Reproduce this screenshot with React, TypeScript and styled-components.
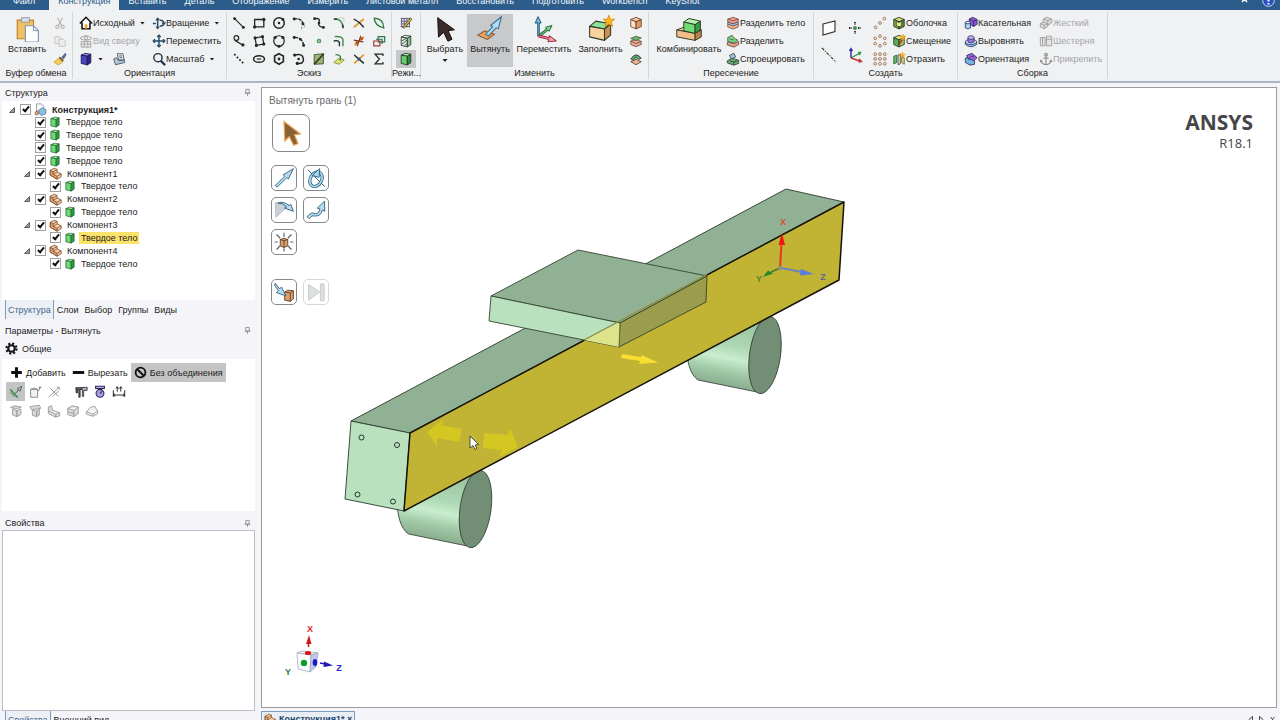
import React from 'react';
import styled, { createGlobalStyle, css } from 'styled-components';

const GlobalStyle = createGlobalStyle`
  *, *::before, *::after { box-sizing: border-box; }
  html, body, #root { height: 100%; }
  body {
    margin: 0;
    overflow: hidden;
    background: #f5f5f9;
    color: #1c1c1c;
    font: 9px/12px "Liberation Sans", Arial, sans-serif;
  }
  button { font: inherit; color: inherit; }
  svg { display: block; flex: none; }
`;

/* ---------- icons ---------- */

const K = '#1d2b22';

const Iso = ({ t, l, r, s = K }: { t: string; l: string; r: string; s?: string }) => (
  <g stroke={s} strokeWidth="0.9" strokeLinejoin="round">
    <path d="M8 1.5 14 4 8 6.8 2 4Z" fill={t} />
    <path d="M2 4 8 6.8V14.8L2 12Z" fill={l} />
    <path d="M14 4 8 6.8V14.8L14 12Z" fill={r} />
  </g>
);

const Block = ({ t, l, r, s = K }: { t: string; l: string; r: string; s?: string }) => (
  <g stroke={s} strokeWidth="0.9" strokeLinejoin="round">
    <path d="M2.5 3.5 7 1.5 13.5 2.5 9.5 4.8Z" fill={t} />
    <path d="M2.5 3.5 9.5 4.8V14.8L2.5 13Z" fill={l} />
    <path d="M9.5 4.8 13.5 2.5V12.2L9.5 14.8Z" fill={r} />
  </g>
);

const dot = (x: number, y: number, r = 1.3, f = K) => <circle key={`${x}-${y}`} cx={x} cy={y} r={r} fill={f} />;
const ring = (x: number, y: number) => (
  <circle key={`${x}-${y}`} cx={x} cy={y} r="1.6" fill="#f6e3cf" stroke="#8d6a4a" strokeWidth="0.9" />
);
const pencil = <path d="M4 13 13 2 14.8 3.6 6 14Z" fill="#dcc04a" stroke="#3b3413" strokeWidth="0.8" />;
const spark = (x: number, y: number) => (
  <path
    transform={`translate(${x} ${y})`}
    d="M0-3.4.9-1 3.3-1.1 1.4.6 2.2 3 0 1.6-2.2 3-1.4.6-3.3-1.1-.9-1Z"
    fill="#ffb91f"
    stroke="#e08a10"
    strokeWidth="0.5"
  />
);

const icons: Record<string, React.ReactNode> = {
  paste: (
    <>
      <path d="M2 2.5H12V14H2Z" fill="#f0c063" stroke="#b8862e" strokeWidth="0.7" />
      <path d="M4.5 1H9.5V3.8H4.5Z" fill="#d9dde2" stroke="#8a8f96" strokeWidth="0.5" />
      <path d="M7 6H12L15 9V16H7Z" fill="#fdfeff" stroke="#7d94b0" strokeWidth="0.7" />
      <path d="M12 6V9H15" fill="none" stroke="#7d94b0" strokeWidth="0.6" />
    </>
  ),
  cut: (
    <g fill="none" stroke="#b5b5b5" strokeWidth="1.3">
      <path d="M5 2 10 11M11 2 6 11" />
      <circle cx="5" cy="12.5" r="1.8" />
      <circle cx="11" cy="12.5" r="1.8" />
    </g>
  ),
  copy: (
    <g fill="#ececec" stroke="#c0c0c0">
      <path d="M2 3H7L9 5V11H2Z" />
      <path d="M7 6H12L14 8V14H7Z" />
    </g>
  ),
  brush: (
    <>
      <path d="M10 6 14 1.5 15 3 12 8Z" fill="#4a6ea8" stroke="#2d446e" strokeWidth="0.6" />
      <path d="M8 5 12.5 9.5 11 11 6.5 7Z" fill="#7c5a2c" />
      <path d="M6.5 7 11 11.5 6 15 1 11.5Z" fill="#f0cf52" stroke="#a98420" strokeWidth="0.6" />
    </>
  ),
  home: (
    <>
      <path d="M3.5 8 8 3.5 12.5 8V14.5H3.5Z" fill="#fff" />
      <path d="M1 8.5 8 1.5 15 8.5M3.5 7.5V14.5H12.5V7.5" fill="none" stroke="#141414" strokeWidth="1.8" />
      <path d="M6.5 9.5H9.5V14.5H6.5Z" fill="#f1a32e" />
    </>
  ),
  planview: (
    <g fill="none" stroke="#9c9c9c">
      <path d="M1 5Q8-1 15 5Q8 9 1 5Z" />
      <circle cx="8" cy="4.5" r="1.8" />
      <path d="M2.5 8.5H13.5V15H2.5ZM2.5 11.5H13.5M6 8.5V15M10 8.5V15" />
    </g>
  ),
  cube: <Block t="#8f8ff0" l="#4a44c4" r="#2b2780" s="#14124a" />,
  sheetview: (
    <g stroke="#44505f" strokeWidth="1" strokeLinejoin="round">
      <path d="M6 2H12.5L14 9H7.5Z" fill="#eef3f8" />
      <path d="M2 8 5 6.5 7.5 10 14 9.5 14.5 12 4 14.5Z" fill="#b9cadb" />
      <path d="M8 4.5H11.5M8.6 6.5H12" />
    </g>
  ),
  spin: (
    <g fill="none" stroke="#274b63" strokeWidth="1.7">
      <path d="M6.5 3V13.5M1 8.5H4.5M9 5Q13 4.5 13.5 8.5Q13 12 9 11.5" />
      <path d="M4.5 5 6.5 2.5 8.5 5M4.5 12 6.5 14.5 8.5 12M11.5 7.5 13.5 9.5 15.5 7" strokeWidth="1.3" />
    </g>
  ),
  pan: (
    <g fill="none" stroke="#1f4a66" strokeWidth="1.6">
      <path d="M8 1.5V14.5M1.5 8H14.5" />
      <path d="M6 3.5 8 1.5 10 3.5M6 12.5 8 14.5 10 12.5M3.5 6 1.5 8 3.5 10M12.5 6 14.5 8 12.5 10" />
    </g>
  ),
  zoom: (
    <g fill="none" stroke="#1d3348">
      <circle cx="6.8" cy="6.5" r="4.7" strokeWidth="1.6" />
      <path d="M10 10 15 15" strokeWidth="2.5" />
    </g>
  ),
  line: (
    <>
      <path d="M3 3 13 13" stroke={K} strokeWidth="1.5" />
      {dot(3, 3, 1.7)}
      {dot(13, 13, 1.7)}
    </>
  ),
  rect: (
    <>
      <path d="M3 4H13.5V12.5H3Z" fill="none" stroke={K} strokeWidth="1.5" />
      {dot(3, 12.5, 1.9)}
      {dot(13.5, 4, 1.9)}
    </>
  ),
  circle: (
    <>
      <circle cx="8" cy="8" r="6" fill="none" stroke={K} strokeWidth="1.7" />
      {dot(8, 8, 1.4)}
      {dot(12.5, 4, 1.6)}
    </>
  ),
  tarc: (
    <>
      <path d="M2 3.5Q11 2 12.5 9" fill="none" stroke={K} strokeWidth="1.6" strokeDasharray="4 1" />
      {dot(2.5, 3.5, 1.7)}
      {dot(12.5, 9, 1.7)}
      <path d="M11 12V15M14 10V13" stroke="#7a8a82" />
    </>
  ),
  spline: (
    <>
      <path d="M3 3Q10 2 8 7T13 13" fill="none" stroke={K} strokeWidth="1.6" />
      {dot(3, 3, 1.7)}
      {dot(8, 8, 1.5)}
      {dot(13, 13, 1.7)}
    </>
  ),
  fillet: (
    <>
      <path d="M2.5 3.5Q12 3 12.5 13.5" fill="none" stroke="#3c8d4c" strokeWidth="1.7" />
      <path d="M2 3.5H6M12.5 10V14" stroke={K} strokeWidth="1.5" />
      <path d="M8 2H13.5V7" fill="none" stroke="#8aa890" strokeDasharray="1 1" />
    </>
  ),
  trim: (
    <>
      <path d="M2 13 13.5 3.5" stroke="#e09a2f" strokeWidth="2.2" />
      <path d="M2 3.5Q8 6 13.5 13" stroke={K} strokeWidth="1.7" fill="none" />
    </>
  ),
  offsetloop: <path d="M2.5 2.5Q13 3 13.5 13.5Q3.5 12 2.5 2.5Z" fill="none" stroke="#2c7a3d" strokeWidth="1.5" />,
  tline: (
    <>
      <circle cx="5" cy="4.5" r="2.7" fill="none" stroke={K} strokeWidth="1.4" />
      <path d="M3 7 12 12.5" stroke={K} strokeWidth="1.5" />
      {dot(12.5, 12.5, 1.8)}
    </>
  ),
  rect3: (
    <>
      <path d="M3.5 4.5 12 3 13.5 11.5 5 13Z" fill="none" stroke={K} strokeWidth="1.4" />
      {[[3.5, 4.5], [12, 3], [13.5, 11.5], [5, 13]].map(([x, y]) => dot(x, y, 1.8))}
    </>
  ),
  circle3: (
    <>
      <circle cx="8" cy="8" r="6" fill="none" stroke={K} strokeWidth="1.4" />
      {dot(3.5, 4, 1.8)}
      {dot(12.5, 4, 1.8)}
      {dot(8, 14, 1.8)}
    </>
  ),
  arc3: (
    <>
      <path d="M2 4Q11 3 13.5 13" fill="none" stroke={K} strokeWidth="1.6" strokeDasharray="5 1" />
      {dot(2.5, 4, 1.7)}
      {dot(9.5, 6, 1.5)}
      {dot(13.3, 13, 1.7)}
    </>
  ),
  point: (
    <>
      {dot(8, 8, 2.7, '#4f9a62')}
      <circle cx="8" cy="8" r="1" fill="#c3e9c9" />
    </>
  ),
  offset: (
    <>
      <path d="M3 3Q11 2.5 12.5 6V14" fill="none" stroke="#3c8d4c" strokeWidth="1.6" />
      <path d="M2 8Q7.5 6.5 8.5 10V14" fill="none" stroke={K} strokeWidth="1.5" />
    </>
  ),
  split: (
    <>
      <path d="M3 13 13.5 3" stroke="#e09a2f" strokeWidth="2.2" />
      <path d="M2 7 13 9M10 2 6 14" stroke="#7a3a1c" strokeWidth="1.2" />
      {dot(5.5, 10, 1.7, '#c7451e')}
      {dot(11, 5.5, 1.7, '#c7451e')}
    </>
  ),
  project: (
    <g fill="none" strokeWidth="1.4">
      <path d="M7 3H14.5V9H7Z" stroke="#2c7a3d" />
      <path d="M2 8H9V13.5H2Z" stroke="#a43c32" />
      <path d="M4.5 6H11.5V11.5" stroke="#2e6c58" />
    </g>
  ),
  cline: <path d="M2.5 2.5 13.5 13.5" stroke={K} strokeWidth="2" strokeDasharray="2 2.2" />,
  ellipse: (
    <>
      <ellipse cx="8" cy="8" rx="6.2" ry="3.8" fill="none" stroke={K} strokeWidth="1.7" />
      <path d="M5.5 8H10.5" stroke={K} strokeWidth="1.3" />
    </>
  ),
  polygon: (
    <>
      <path d="M8 2 13 4.5V11L8 14 3 11V4.5Z" fill="none" stroke={K} strokeWidth="1.9" />
      {dot(8, 8, 1.6)}
    </>
  ),
  sweeparc: (
    <>
      <path d="M3 3.5Q12 1 13 7.5T6 13" fill="none" stroke={K} strokeWidth="1.7" />
      {dot(3, 3.5, 1.8)}
      {dot(6, 13, 1.8)}
      {dot(7.5, 8, 1.5)}
    </>
  ),
  face: (
    <>
      <path d="M2.5 3 13 2V13.5L2.5 14Z" fill="#9ab57a" stroke="#34502c" />
      <path d="M2.5 14 13.5 2" stroke="#3d3514" strokeWidth="2" />
    </>
  ),
  bend: (
    <>
      <path d="M2 12 8 7 14 9 8 14Z" fill="#e9e36e" stroke="#6b8b34" strokeWidth="0.9" />
      <path d="M4 3Q12 3 9 10" fill="none" stroke="#2c7a3d" strokeWidth="1.5" />
    </>
  ),
  cross: (
    <>
      <path d="M2.5 13 13.5 3" stroke="#e09a2f" strokeWidth="2.3" />
      <path d="M2.5 3.5 13.5 13" stroke={K} strokeWidth="1.6" />
      {dot(8, 8, 1.8, '#2b4ea0')}
    </>
  ),
  sigma: <path d="M12.5 4.5V2.5H3.5L8.5 8 3.5 13.5H12.5V11.5" fill="none" stroke={K} strokeWidth="1.4" />,
  msketch: (
    <>
      <path d="M2 3H12M2 6H12M2 9H12M2 12H12M3 2V13M6 2V13M9 2V13M12 2V13" stroke="#4c4270" strokeWidth="0.9" />
      {pencil}
    </>
  ),
  msection: (
    <>
      <Block t="#f3f7f2" l="#dff0df" r="#8cc391" />
      <path d="M3 8 8 5M3 12 9 7M6 13.5 9 11" stroke={K} strokeWidth="0.9" />
    </>
  ),
  msolid: <Block t="#b6f0b2" l="#62cf66" r="#2f8a3a" />,
  solid: <Block t="#a9efab" l="#6bdc73" r="#2f9a41" s="#185a26" />,
  select: (
    <path d="M3.5 1 4 13 7.2 10 9.8 15.5 12.3 14.3 9.9 9 13.8 8.5Z" fill="#3a2c28" stroke="#130d0b" strokeWidth="0.6" />
  ),
  pull: (
    <>
      <path d="M1 11.5 5 9 10.5 11 6.5 14Z" fill="#e9a05f" stroke="#8c5425" strokeWidth="0.6" />
      <path d="M5.5 11 9.5 6.8 8.3 6 14.5 1 12.8 7.8 11.5 7.3 7 12Z" fill="#b3dcf2" stroke="#376c8d" strokeWidth="0.6" />
    </>
  ),
  move: (
    <g strokeWidth="0.6" strokeLinejoin="round">
      <path d="M4.4 12V4.5H3L4.6 1 6.3 4.5H5.3V11Z" fill="#7bbdd8" stroke="#2a6783" />
      <path d="M5.5 11 9.5 8 9 7 12.5 6 11 9.2 10.3 8.6 6 12Z" fill="#8bd19a" stroke="#2c7a3d" />
      <path d="M5.5 11.5 11 13V11.8L15 14.8 10.3 15.3 10.7 14 5 12.5Z" fill="#f3a3ae" stroke="#a33443" />
    </g>
  ),
  fill: (
    <>
      <g stroke="#2f3b26" strokeWidth="0.6" strokeLinejoin="round">
        <path d="M1.5 6.5 5 3.5 13.5 5 10 8Z" fill="#8ee29a" />
        <path d="M1.5 6.5 10 8V14.5L1.5 12.5Z" fill="#f7d3a0" />
        <path d="M10 8 13.5 5V11.5L10 14.5Z" fill="#c98f52" />
      </g>
      {spark(12.5, 3.5)}
    </>
  ),
  blend: <Iso t="#f3c7a1" l="#fbe4cd" r="#dc9a68" s="#60341b" />,
  replace: (
    <g stroke="#4b3a2a" strokeWidth="0.8" strokeLinejoin="round">
      <path d="M2 8 8 6 14 8.5V12L8 14.5 2 12Z" fill="#f0a792" />
      <path d="M2 5 8 2.5 14 4.5 8 7.5Z" fill="#58bf6f" />
      <path d="M2 8 8 11 14 8.5" fill="none" />
    </g>
  ),
  tweak: (
    <g stroke="#3b3a30" strokeWidth="0.9" strokeLinejoin="round">
      <path d="M2 11 8 8.5 14 11 8 14.5Z" fill="#f3b48f" />
      <path d="M2 8Q8-1 14 7L11 8.5Q8 4 5 9.5Z" fill="#55a26b" />
    </g>
  ),
  combine: (
    <g stroke="#2f3b26" strokeWidth="0.55" strokeLinejoin="round">
      <path d="M1 8.5 5 7 15 8.5 11.5 10.5Z" fill="#fbd9ae" />
      <path d="M1 8.5 11.5 10.5V14.5L1 12.5Z" fill="#f3bd88" />
      <path d="M11.5 10.5 15 8.5V12.5L11.5 14.5Z" fill="#bf8049" />
      <path d="M5 4 8 2 14.5 3.5 11.5 5.5Z" fill="#b5f3ae" />
      <path d="M5 4 11.500 5.5V10.5L5 9Z" fill="#6fdc74" />
      <path d="M11.5 5.5 14.5 3.5V8.5L11.5 10.5Z" fill="#379c44" />
    </g>
  ),
  splitbody: (
    <g stroke="#5b4038" strokeWidth="0.8" strokeLinejoin="round">
      <path d="M2 9 8 11 14 9V12.5L8 15 2 12.5Z" fill="#f4b08f" />
      <path d="M2 6.5 8 9 14 6.5V9L8 11.5 2 9Z" fill="#9bc6ea" />
      <path d="M2 3.5 8 1.5 14 3.5V6.5L8 8.8 2 6.5Z" fill="#f3a08a" />
      <path d="M2 3.5 8 5.5 14 3.5" fill="none" />
    </g>
  ),
  splitface: (
    <g stroke="#33402c" strokeWidth="0.8" strokeLinejoin="round">
      <path d="M1.5 9 9 11 14.5 8.5V12L9 15 1.5 12.5Z" fill="#f09a84" />
      <path d="M2 4 7 1.5 9 4.5 13.5 7 9 10.5 2 8Z" fill="#7ed586" />
      <path d="M4 5.5 9 7" />
    </g>
  ),
  projectc: (
    <g stroke="#2d3b33" strokeWidth="0.9" strokeLinejoin="round">
      <path d="M1.5 10 7 7 14.5 9.5V13L9 15 1.5 12.5Z" fill="#6cae71" />
      <path d="M4 4 9 1.5 11 5.5 6 8Z" fill="#9cc4e8" />
      <path d="M9 10.5V15M4 10 9 11.5 14 9.5" fill="none" />
    </g>
  ),
  plane: <path d="M2 4 14 1V11.5L2 15Z" fill="#fff" stroke="#2d2d2d" strokeWidth="1.1" />,
  axis: <path d="M1 1 15 15" stroke="#2d2d2d" strokeWidth="1.1" strokeDasharray="3 1.2 1 1.2" />,
  pointc: (
    <>
      <path d="M8 2V5M8 11V14M2 8H5M11 8H14" stroke={K} strokeWidth="1.8" strokeDasharray="1.5 1" />
      {dot(8, 8, 2, '#3f8a58')}
    </>
  ),
  origin: (
    <g fill="none" strokeWidth="1.4">
      <path d="M4 11V2M2.5 4 4 1.5 5.5 4" stroke="#2a2aa8" />
      <path d="M4 11 13 6M11 5.5 13.5 5.5 12.5 8" stroke="#2c9a4d" />
      <path d="M4 11 14 14.5M12 12 14.5 14.5 11.5 15" stroke="#c23535" />
    </g>
  ),
  patline: <>{[[3, 13], [8, 8], [13, 3]].map(([x, y]) => ring(x, y))}</>,
  patcircle: <>{[[2.5, 5], [8, 2.5], [13.5, 5], [13.5, 11], [8, 13.5], [2.5, 11]].map(([x, y]) => ring(x, y))}</>,
  patfill: <>{[2.5, 8, 13.5].flatMap(y => [2.5, 8, 13.5].map(x => ring(x, y)))}</>,
  shell: (
    <>
      <Iso t="#d3dd76" l="#7aa33e" r="#5d8430" />
      <path d="M5 6V11L8 12.3 11 11V6L8 7.5Z" fill="#e3e98d" stroke="#34401c" strokeWidth="0.8" />
    </>
  ),
  offsetf: (
    <>
      <Iso t="#dfe07b" l="#5fae55" r="#a5c956" />
      <path d="M8 12 11.5 6.5" stroke="#a42b1e" strokeWidth="1.6" />
      {spark(12.5, 3.5)}
    </>
  ),
  mirror: (
    <>
      <path d="M2 5 5.5 3.5V12L2 13.5Z" fill="#62b768" stroke="#1f5a2a" strokeWidth="0.9" />
      <path d="M7 3.5 9.5 2.5V13.5L7 14.5Z" fill="#e5eadf" stroke="#35402f" strokeWidth="0.9" />
      <path d="M11 5.5 14 7V14L11 12Z" fill="#d7dc80" stroke="#5c6420" strokeWidth="0.9" />
      {spark(12, 3.5)}
    </>
  ),
  tangent: (
    <g stroke="#26205c" strokeWidth="0.9" strokeLinejoin="round">
      <path d="M6 3.5 10 1.5 15 4V9.5L11 12 6 9Z" fill="#8e5ad4" />
      <path d="M6 3.5 11 6V12M11 6 15 4" fill="none" />
      <path d="M1.5 7.5V13.5Q4.5 16 7.5 13.5V7.5Z" fill="#a8d6f0" />
      <ellipse cx="4.5" cy="7.5" rx="3" ry="1.5" fill="#d9effa" />
    </g>
  ),
  align: (
    <g stroke="#2c2b63" strokeWidth="0.9">
      <path d="M1.5 9V12Q8 17 14.5 12V9Z" fill="#8ec4e8" />
      <ellipse cx="8" cy="9" rx="6.5" ry="3" fill="#c8e5f6" />
      <path d="M4.5 4V9Q8 11.5 11.5 9V4Z" fill="#9a78dc" />
      <ellipse cx="8" cy="4" rx="3.5" ry="2" fill="#cdb9f3" />
    </g>
  ),
  orient: (
    <g stroke="#26205c" strokeWidth="0.9" strokeLinejoin="round">
      <path d="M1.5 7 6 6 12 9.5V14L7 15 1.5 12Z" fill="#77b4dd" />
      <path d="M3 4 9 1.5 15 6.5 11 10 8 8.5 5 8Z" fill="#9a69d6" />
      <path d="M5 8 9 4.5 12 6" fill="none" />
    </g>
  ),
  rigid: (
    <g fill="#dcdcdc" stroke="#9b9b9b" strokeLinejoin="round">
      <path d="M5 3.5 9 1.5 14.5 3.5V8L10 10.5 5 8.5Z" />
      <path d="M1.5 8.5 5 7 10 9V12L6 14.5 1.5 12.5Z" />
      <path d="M5 3.5 10 5.5 14.5 3.5M10 5.5V10M1.5 8.5 6 10.5 10 9M6 10.5V14" fill="none" />
    </g>
  ),
  gear: (
    <g fill="#e3e3e3" stroke="#9b9b9b">
      <path d="M1.5 4H7V13.5H1.5Z" />
      <path d="M8.5 2.5H14.5V13.5H8.5ZM4 4V13M8.5 6H14.5" />
    </g>
  ),
  anchor: (
    <g fill="none" stroke="#8e8e8e" strokeWidth="1.3">
      <circle cx="8" cy="3" r="1.5" />
      <path d="M8 4.5V14.5M5 7H11M2 9.5Q3 14 8 14.5Q13 14 14 9.5M1.5 11.5 2 9.5 4 10.5M14.5 11.5 14 9.5 12 10.5" />
    </g>
  ),
  doc: (
    <g strokeWidth="0.8" strokeLinejoin="round">
      <path d="M3 1H9L12 4V12H3Z" fill="#f3f7fb" stroke="#6e7c8b" />
      <path d="M6 9 10 6 14.5 8V13L10 15.5 6 13Z" fill="#8fbfdf" stroke="#36627e" />
      <path d="M1.5 11 5 9.5V14.5H1.5Z" fill="#e2b184" stroke="#7c5330" />
    </g>
  ),
  component: (
    <g stroke="#6e3f20" strokeWidth="0.9" strokeLinejoin="round">
      <path d="M1.5 4 6.5 1.5 10 3V6L15 8.5V12L10 15 1.5 10Z" fill="#f6cba6" />
      <path d="M1.5 4 5 6V9L10 11.5V15L1.5 10Z" fill="#e3a270" />
      <path d="M5 6 10 3M5 9 10 6M10 11.5 15 8.5" fill="none" />
    </g>
  ),
  pin: <path d="M5 2.5H11V9H5ZM3 9.5H13M8 9.5V14" fill="none" stroke="#8d8d96" strokeWidth="1.6" />,
  cog: (
    <g fill="none" stroke="#161616">
      <circle cx="8" cy="8" r="4" strokeWidth="2.6" />
      <circle cx="8" cy="8" r="6.2" strokeWidth="2.6" strokeDasharray="2.6 2.27" />
    </g>
  ),
  plus: <path d="M8 1.5V14.5M1.5 8H14.5" stroke="#0e0e0e" strokeWidth="3.6" />,
  minus: <path d="M1 8H15" stroke="#0e0e0e" strokeWidth="3.6" />,
  forbid: (
    <g fill="none" stroke="#0e0e0e" strokeWidth="2.2">
      <circle cx="8" cy="8" r="6" />
      <path d="M4 4 12 12" />
    </g>
  ),
  pulldir: (
    <>
      <path d="M6 11 11 5.5M9.500 4.500 14.500 1.500 12.500 7Z" fill="#c9d3d6" stroke="#4b5a5c" strokeWidth="1.1" />
      <path d="M1.5 5 8 12.5 10 14" fill="none" stroke="#35914a" strokeWidth="1.8" />
      <path d="M1.500 8.500 6 13.500" stroke="#5b6a66" />
    </>
  ),
  pullbox: (
    <g fill="#f1f1f1" stroke="#7d7d7d">
      <path d="M3 5 7 3.5 11 5V14H3ZM3 5H11M12 7 14 2M12 3 14 2 15 4" />
    </g>
  ),
  pullcross: (
    <g fill="none" stroke="#909090">
      <path d="M2 13.5 14 2.5M11 2.5H14V5.5M3 3 13 13M6 13 13.5 7" />
    </g>
  ),
  calipers: (
    <g stroke="#22262b" strokeWidth="0.9">
      <path d="M2 3H9V5H7V14H5.5V5H4V9H2.5Z" fill="#5a6068" />
      <path d="M8.5 3 15 2.5V6L11 6.5V13H9.5V5Z" fill="#a9b0b8" />
    </g>
  ),
  gauge: (
    <g stroke="#27244f" strokeWidth="1.2">
      <path d="M3 1.5H13V4H3Z" fill="#b9b8e6" />
      <circle cx="8" cy="9.5" r="4.5" fill="#a5a1de" />
      <path d="M8 9.5 10.5 7" />
    </g>
  ),
  ruler: (
    <path d="M1.5 6V13.5M14.500 6V13.500M1.5 11.500H14.5M6 2V7.500M10 2V7.500M4.5 4 6 2 7.5 4M8.5 4 10 2 11.5 4M3.500 10 1.500 11.500 3.500 13M12.500 10 14.500 11.500 12.500 13" fill="none" stroke="#22262b" strokeWidth="1.1" />
  ),
  g1: (
    <path d="M1.5 4 7 2 14 3.5 9 5.5ZM4 6 9 7.5V14.5L4 12.5ZM9 7.5 13.5 5.5V12L9 14.5Z" fill="#dadada" stroke="#999" strokeLinejoin="round" />
  ),
  g2: (
    <path d="M2 3 13 1.5 14.5 5 4 6.5ZM5 7 10 8V14.5L5 13ZM10 8 13 6V12.5L10 14.5Z" fill="#dadada" stroke="#999" strokeLinejoin="round" />
  ),
  g3: (
    <path d="M1.5 3.5 5 2 6.5 7 14.5 10V13.5L10 15 1.5 11ZM1.5 8 10 11.5 14 10M10 11.5V15" fill="#dadada" stroke="#999" strokeLinejoin="round" />
  ),
  g4: (
    <path d="M2 5 7 2 14 3.5V11L9 14.5 2 12ZM2 5 9 7 14 3.5M9 7V14M2 9 9 11" fill="#dadada" stroke="#999" strokeLinejoin="round" />
  ),
  g5: (
    <path d="M1.5 9 6 4 11 2.5 14.5 8V11L9 14 1.5 11.5ZM1.5 9 9 11.5 14.5 8M9 11.5V14" fill="#f0f0f0" stroke="#999" strokeLinejoin="round" />
  ),
  goldarrow: (
    <path d="M4 1.500 4.500 12.5 7 10 9.5 15 12 14 9.9 9 13.3 8.5Z" fill="#85633a" stroke="#f0a04a" strokeWidth="0.7" />
  ),
  vdir: <path d="M1 14 8.5 6.5 7.3 5.5 15.5 0.5 11.5 8.8 10.3 7.7 2.5 15.3Z" fill="#b4dcee" stroke="#2b5c78" strokeWidth="0.7" />,
  vrev: (
    <g stroke="#2b5c78" fill="none">
      <path d="M1.500 1.500 15 15" strokeWidth="0.8" />
      <ellipse cx="8" cy="9" rx="4.500" ry="6.200" strokeWidth="2.6" transform="rotate(30 8 9)" />
      <ellipse cx="8" cy="9" rx="4.500" ry="6.200" strokeWidth="1.4" stroke="#a9d9f0" transform="rotate(30 8 9)" />
      <path d="M5 6 11 0.5 10.500 7.500Z" fill="#a9d9f0" strokeWidth="0.7" />
    </g>
  ),
  vedge: (
    <>
      <path d="M1 2 12 4 1.5 14Z" fill="#c9cfd6" stroke="#a4acb6" strokeWidth="0.5" />
      <path d="M3 2.500Q7 2 10 5.500L8.500 6.500 15.500 9 13.500 3.500 12 4.500Q8 0.500 3 2.500Z" fill="#b4dcee" stroke="#2b5c78" strokeWidth="0.7" />
    </>
  ),
  vsweep: (
    <path d="M1 13.500Q4 9 7.5 11Q11 10.500 11 7L9 6.500 14.8 1 15 9 13 8Q12 13 7.500 12.800Q4.5 11.500 2.5 15Z" fill="#b4dcee" stroke="#2b5c78" strokeWidth="0.7" />
  ),
  vscale: (
    <>
      <path d="M2 2 5 5M14 2 11 5M2 14 5 11M14 14 11 11M8 0.5V4M8 15.5V13M0.5 8H3M15.5 8H13" stroke="#5b5f66" strokeWidth="0.9" />
      <path d="M5 6 8 5 11 6V11L8 12.5 5 11Z" fill="#d99f6e" stroke="#5e3d22" strokeWidth="0.7" />
      <path d="M5 6 8 7 11 6M8 7V12" stroke="#5e3d22" strokeWidth="0.7" fill="none" />
    </>
  ),
  vupto: (
    <>
      <path d="M8.5 8 11 6.5 15.5 7V13.5L13 15.5 8.5 14.500Z" fill="#d99f6e" stroke="#5e3d22" strokeWidth="0.7" />
      <path d="M8.500 8 13 8.800V15.500M13 8.800 15.500 7" fill="none" stroke="#5e3d22" strokeWidth="0.7" />
      <path d="M1 1 4.5 5.5 6 4 9.5 11 2 8.5 3.5 7 0.5 2.5Z" fill="#b4dcee" stroke="#2b5c78" strokeWidth="0.7" />
    </>
  ),
  vnext: (
    <g fill="#dde2df" stroke="#c2c7c4" strokeWidth="0.7">
      <path d="M2 2 11 8 2 14.5Z" />
      <path d="M11.5 1.5H14.5V15H11.5Z" />
    </g>
  ),
};

const Icon = ({ name, size = 14 }: { name: string; size?: number }) => (
  <svg width={size} height={size} viewBox="0 0 16 16" aria-hidden="true">
    {icons[name]}
  </svg>
);

/* ---------- window and ribbon ---------- */

const Window = styled.div`
  display: flex;
  flex-direction: column;
  height: 100vh;
  white-space: nowrap;
`;

const TabBar = styled.nav`
  display: flex;
  flex: none;
  align-items: flex-end;
  height: 10px;
  padding: 0 5px 0 4px;
  overflow: hidden;
  background: #2b5c8a;
`;

const RibbonTab = styled.button<{ $active?: boolean; $file?: boolean }>`
  flex: none;
  height: 19px;
  padding: 0 ${p => (p.$file ? 14 : 9)}px 0 9px;
  border: 0;
  line-height: 18px;
  color: ${p => (p.$active ? '#2b5c8a' : '#f1f6fb')};
  background: ${p => (p.$active ? '#f0f1f2' : 'transparent')};
`;

const TabBarTools = styled.div`
  display: flex;
  align-items: flex-end;
  gap: 14px;
  margin-left: auto;
`;

const BarButton = styled.button`
  display: grid;
  place-items: center;
  height: 19px;
  padding: 0;
  border: 0;
  background: transparent;
`;

const Ribbon = styled.div`
  display: flex;
  flex: none;
  height: 73px;
  background: #f0f1f2;
  border-bottom: 2px solid #a9b8c4;
`;

const Group = styled.section<{ $width: number }>`
  display: flex;
  flex-direction: column;
  flex: 0 0 ${p => p.$width}px;
  min-width: 0;
  margin: 2px 0;
  padding-top: 2px;
  border-right: 1px solid #d3d6d9;
`;

const GroupBody = styled.div<{ $pad?: number; $center?: boolean }>`
  display: flex;
  flex: 1;
  padding-left: ${p => p.$pad ?? 0}px;
  justify-content: ${p => (p.$center ? 'center' : 'flex-start')};
`;

const GroupLabel = styled.h2`
  margin: 0;
  padding-bottom: 1px;
  font-size: 9px;
  line-height: 11px;
  font-weight: 400;
  text-align: center;
`;

const Stack = styled.div<{ $width?: number; $align?: string }>`
  display: grid;
  grid-template-rows: repeat(3, 18px);
  justify-items: ${p => p.$align ?? 'start'};
  flex: none;
  width: ${p => (p.$width ? `${p.$width}px` : 'auto')};
`;

const ToolRow = styled.div`
  display: flex;
  align-items: center;
  gap: 4px;
`;

const toolBase = css`
  display: inline-flex;
  align-items: center;
  padding: 0;
  border: 0;
  background: transparent;
`;

const Tool = styled.button<{ $active?: boolean }>`
  ${toolBase}
  height: 18px;
  padding: 0 ${p => (p.$active ? 3 : 0)}px;
  background: ${p => (p.$active ? '#c6c7c8' : 'transparent')};
  &:disabled { color: #a3a5a8; }
`;

const BigTool = styled.button<{ $width: number; $active?: boolean }>`
  ${toolBase}
  flex-direction: column;
  flex: 0 0 ${p => p.$width}px;
  height: 53px;
  padding-top: 1px;
  background: ${p => (p.$active ? '#c8c9ca' : 'transparent')};
`;

const BigIcon = styled.span`
  display: grid;
  place-items: center;
  height: 28px;
`;

const Caret = styled.span`
  width: 5px;
  height: 3px;
  margin: 0 5px;
  background: #1c1c1c;
  clip-path: polygon(0 0, 100% 0, 50% 100%);
`;

const BigCaret = styled(Caret)`
  margin-top: 4px;
`;

const SketchGrid = styled.div`
  display: grid;
  grid-template: repeat(3, 18px) / repeat(8, 20px);
  place-items: center;
`;

const DatumGrid = styled.div`
  display: grid;
  grid-template: repeat(2, 27px) / repeat(2, 26px);
  place-items: center;
`;

const Labeled = ({ icon, text, caret, disabled }: { icon: string; text: string; caret?: boolean; disabled?: boolean }) => (
  <Tool type="button" disabled={disabled}>
    <Icon name={icon} />
    {text}
    {caret && <Caret />}
  </Tool>
);

const Glyph = ({ icon, label, active, size }: { icon: string; label: string; active?: boolean; size?: number }) => (
  <Tool type="button" aria-label={label} $active={active}>
    <Icon name={icon} size={size} />
  </Tool>
);

const Big = ({ icon, text, width, size = 28, active, caret }: {
  icon: string; text: string; width: number; size?: number; active?: boolean; caret?: boolean;
}) => (
  <BigTool type="button" $width={width} $active={active}>
    <BigIcon><Icon name={icon} size={size} /></BigIcon>
    {text}
    {caret && <BigCaret />}
  </BigTool>
);

const ribbonTabs = ['Файл', 'Конструкция', 'Вставить', 'Деталь', 'Отображение', 'Измерить', 'Листовой металл', 'Восстановить', 'Подготовить', 'Workbench', 'KeyShot'];

const sketchTools = [
  'line', 'rect', 'circle', 'tarc', 'spline', 'fillet', 'trim', 'offsetloop',
  'tline', 'rect3', 'circle3', 'arc3', 'point', 'offset', 'split', 'project',
  'cline', 'ellipse', 'polygon', 'sweeparc', 'face', 'bend', 'cross', 'sigma',
];

const RibbonBar = () => (
  <Ribbon>
    <Group $width={73}>
      <GroupBody $pad={4}>
        <Big icon="paste" text="Вставить" width={46} size={26} />
        <Stack $width={20} $align="center">
          <Glyph icon="cut" label="Вырезать" />
          <Glyph icon="copy" label="Копировать" />
          <Glyph icon="brush" label="Формат по образцу" />
        </Stack>
      </GroupBody>
      <GroupLabel>Буфер обмена</GroupLabel>
    </Group>
    <Group $width={154}>
      <GroupBody $pad={6}>
        <Stack $width={73}>
          <Labeled icon="home" text="Исходный" caret />
          <Labeled icon="planview" text="Вид сверху" disabled />
          <ToolRow>
            <Tool type="button" aria-label="Виды"><Icon name="cube" /><Caret /></Tool>
            <Glyph icon="sheetview" label="Вид на плоскость" />
          </ToolRow>
        </Stack>
        <Stack>
          <Labeled icon="spin" text="Вращение" caret />
          <Labeled icon="pan" text="Переместить" />
          <Labeled icon="zoom" text="Масштаб" caret />
        </Stack>
      </GroupBody>
      <GroupLabel>Ориентация</GroupLabel>
    </Group>
    <Group $width={165}>
      <GroupBody $pad={2}>
        <SketchGrid>
          {sketchTools.map(name => <Glyph key={name} icon={name} label={name} />)}
        </SketchGrid>
      </GroupBody>
      <GroupLabel>Эскиз</GroupLabel>
    </Group>
    <Group $width={29}>
      <GroupBody $center>
        <Stack $align="center">
          <Glyph icon="msketch" label="Режим эскиза" />
          <Glyph icon="msection" label="Режим сечения" />
          <Glyph icon="msolid" label="Объемный режим" active />
        </Stack>
      </GroupBody>
      <GroupLabel>Режи...</GroupLabel>
    </Group>
    <Group $width={228}>
      <GroupBody $pad={2}>
        <Big icon="select" text="Выбрать" width={44} size={26} caret />
        <Big icon="pull" text="Вытянуть" width={46} active />
        <Big icon="move" text="Переместить" width={62} />
        <Big icon="fill" text="Заполнить" width={51} />
        <Stack $width={20} $align="center">
          <Glyph icon="blend" label="Сопряжение" />
          <Glyph icon="replace" label="Заменить" />
          <Glyph icon="tweak" label="Подправить" />
        </Stack>
      </GroupBody>
      <GroupLabel>Изменить</GroupLabel>
    </Group>
    <Group $width={165}>
      <GroupBody $pad={3}>
        <Big icon="combine" text="Комбинировать" width={74} />
        <Stack $width={85}>
          <Labeled icon="splitbody" text="Разделить тело" />
          <Labeled icon="splitface" text="Разделить" />
          <Labeled icon="projectc" text="Спроецировать" />
        </Stack>
      </GroupBody>
      <GroupLabel>Пересечение</GroupLabel>
    </Group>
    <Group $width={144}>
      <GroupBody $pad={2}>
        <DatumGrid>
          <Glyph icon="plane" label="Плоскость" size={16} />
          <Glyph icon="pointc" label="Точка" size={16} />
          <Glyph icon="axis" label="Ось" size={16} />
          <Glyph icon="origin" label="Начало координат" size={16} />
        </DatumGrid>
        <Stack $width={24} $align="center">
          <Glyph icon="patline" label="Линейный массив" />
          <Glyph icon="patcircle" label="Круговой массив" />
          <Glyph icon="patfill" label="Массив заполнения" />
        </Stack>
        <Stack>
          <Labeled icon="shell" text="Оболочка" />
          <Labeled icon="offsetf" text="Смещение" />
          <Labeled icon="mirror" text="Отразить" />
        </Stack>
      </GroupBody>
      <GroupLabel>Создать</GroupLabel>
    </Group>
    <Group $width={150}>
      <GroupBody $pad={6}>
        <Stack $width={75}>
          <Labeled icon="tangent" text="Касательная" />
          <Labeled icon="align" text="Выровнять" />
          <Labeled icon="orient" text="Ориентация" />
        </Stack>
        <Stack>
          <Labeled icon="rigid" text="Жесткий" disabled />
          <Labeled icon="gear" text="Шестерня" disabled />
          <Labeled icon="anchor" text="Прикрепить" disabled />
        </Stack>
      </GroupBody>
      <GroupLabel>Сборка</GroupLabel>
    </Group>
  </Ribbon>
);

/* ---------- side panels ---------- */

const Workspace = styled.div`
  display: flex;
  flex: 1;
  min-height: 0;
`;

const Sidebar = styled.aside`
  display: flex;
  flex-direction: column;
  flex: 0 0 257px;
  min-height: 0;
  padding: 1px 2px 0;
`;

const PanelTitle = styled.h3<{ $tall?: boolean }>`
  display: flex;
  flex: none;
  align-items: center;
  justify-content: space-between;
  height: ${p => (p.$tall ? 19 : 17)}px;
  margin: 0;
  padding: ${p => (p.$tall ? 5 : 0)}px 3px 0;
  font-size: 9px;
  font-weight: 400;
`;

const PanelArea = styled.div<{ $height: number }>`
  flex: 0 0 ${p => p.$height}px;
  padding-top: 2px;
  background: #fff;
`;

const Tree = styled.ul`
  display: grid;
  grid-auto-rows: 1fr;
  height: 167px;
  margin: 0;
  padding: 0;
  list-style: none;
`;

const TreeRow = styled.li<{ $level: number }>`
  display: flex;
  align-items: center;
  gap: 3px;
  padding-left: ${p => 5 + p.$level * 15}px;
`;

const Twisty = styled.button<{ $shown?: boolean }>`
  width: 10px;
  height: 10px;
  padding: 2px;
  border: 0;
  background: transparent;
  visibility: ${p => (p.$shown ? 'visible' : 'hidden')};
`;

const TreeLabel = styled.label<{ $bold?: boolean; $selected?: boolean }>`
  display: flex;
  align-items: center;
  gap: 3px;
  font-weight: ${p => (p.$bold ? 700 : 400)};
  span {
    padding: 0 2px;
    background: ${p => (p.$selected ? '#fbe26a' : 'transparent')};
  }
`;

const Check = styled.input`
  appearance: none;
  position: relative;
  width: 11px;
  height: 11px;
  margin: 0;
  border: 1px solid #a0a0a0;
  background: #fff;
  &:checked::after {
    content: '';
    position: absolute;
    left: 3px;
    top: 0;
    width: 4px;
    height: 7px;
    border: solid #111;
    border-width: 0 2px 2px 0;
    transform: rotate(40deg);
  }
`;

const DockTabs = styled.div<{ $height: number }>`
  display: flex;
  flex: 0 0 ${p => p.$height}px;
  padding-left: 3px;
  overflow: hidden;
`;

const DockTab = styled.button<{ $active?: boolean; $short?: boolean }>`
  flex: none;
  height: ${p => (p.$short ? 17 : 19)}px;
  padding: 0 ${p => (p.$active ? 2 : 3)}px;
  border: solid #7c9dbd;
  border-width: 0 ${p => (p.$active ? '1px' : '0')};
  background: ${p => (p.$active ? '#eceff4' : 'transparent')};
  color: ${p => (p.$active ? '#44698f' : '#1c1c1c')};
`;

const OptionsHead = styled.div`
  flex: none;
  padding: 3px 0 1px;
`;

const OptionsLine = styled.div`
  display: flex;
  align-items: center;
  gap: 4px;
  height: 19px;
  padding-left: 3px;
`;

const ModeRow = styled.div`
  display: flex;
  height: 19px;
  padding: 0 0 0 5px;
  margin-top: 2px;
`;

const ModeButton = styled.button<{ $active?: boolean }>`
  ${toolBase}
  gap: 3px;
  height: 19px;
  padding: 0 3px;
  background: ${p => (p.$active ? '#c4c4c4' : 'transparent')};
`;

const OptionRow = styled.div`
  display: flex;
  height: 19px;
  padding-left: 4px;
`;

const OptionButton = styled.button<{ $active?: boolean; $gap?: boolean }>`
  ${toolBase}
  justify-content: center;
  width: 19px;
  height: 19px;
  margin-left: ${p => (p.$gap ? 8 : 0)}px;
  background: ${p => (p.$active ? '#c4c4c4' : 'transparent')};
`;

const PropertiesBox = styled.div`
  flex: 1;
  min-height: 0;
  background: #fff;
  border: 1px solid #bcbfc6;
`;

type Node = { level: number; kind: 'doc' | 'solid' | 'component'; text: string; selected?: boolean };
const body = (level: number, selected?: boolean): Node => ({ level, kind: 'solid', text: 'Твердое тело', selected });
const part = (n: number): Node => ({ level: 1, kind: 'component', text: `Компонент${n}` });
const nodes: Node[] = [
  { level: 0, kind: 'doc', text: 'Конструкция1*' },
  body(1), body(1), body(1), body(1),
  part(1), body(2), part(2), body(2), part(3), body(2, true), part(4), body(2),
];

const pinIcon = <Icon name="pin" size={9} />;

const SidePanels = () => (
  <Sidebar>
    <PanelTitle>Структура {pinIcon}</PanelTitle>
    <PanelArea $height={199}>
      <Tree>
        {nodes.map((n, i) => (
          <TreeRow key={i} $level={n.level}>
            <Twisty type="button" aria-label="Свернуть" $shown={n.kind !== 'solid'}>
              <svg width="6" height="6" viewBox="0 0 6 6">
                <path d="M5.5 .5V5.5H.5Z" fill="#9a9a9a" stroke="#444" strokeWidth="0.8" />
              </svg>
            </Twisty>
            <TreeLabel $bold={n.kind === 'doc'} $selected={n.selected}>
              <Check type="checkbox" defaultChecked />
              <Icon name={n.kind} size={n.kind === 'solid' ? 12 : 13} />
              <span>{n.text}</span>
            </TreeLabel>
          </TreeRow>
        ))}
      </Tree>
    </PanelArea>
    <DockTabs $height={19}>
      <DockTab type="button" $active>Структура</DockTab>
      {['Слои', 'Выбор', 'Группы', 'Виды'].map(t => <DockTab type="button" key={t}>{t}</DockTab>)}
    </DockTabs>
    <OptionsHead>
      <PanelTitle>Параметры - Вытянуть {pinIcon}</PanelTitle>
      <OptionsLine><Icon name="cog" size={13} />Общие</OptionsLine>
    </OptionsHead>
    <PanelArea $height={152}>
      <ModeRow>
        <ModeButton type="button"><Icon name="plus" size={13} />Добавить</ModeButton>
        <ModeButton type="button"><Icon name="minus" size={13} />Вырезать</ModeButton>
        <ModeButton type="button" $active><Icon name="forbid" size={13} />Без объединения</ModeButton>
      </ModeRow>
      <OptionRow>
        <OptionButton type="button" aria-label="Направление" $active><Icon name="pulldir" /></OptionButton>
        <OptionButton type="button" aria-label="Обе стороны"><Icon name="pullbox" /></OptionButton>
        <OptionButton type="button" aria-label="Без вытягивания"><Icon name="pullcross" /></OptionButton>
        <OptionButton type="button" aria-label="Размер" $gap><Icon name="calipers" /></OptionButton>
        <OptionButton type="button" aria-label="Измерение"><Icon name="gauge" /></OptionButton>
        <OptionButton type="button" aria-label="Линейка"><Icon name="ruler" /></OptionButton>
      </OptionRow>
      <OptionRow>
        {['g1', 'g2', 'g3', 'g4', 'g5'].map(g => (
          <OptionButton type="button" key={g} aria-label={g}><Icon name={g} /></OptionButton>
        ))}
      </OptionRow>
    </PanelArea>
    <PanelTitle $tall>Свойства {pinIcon}</PanelTitle>
    <PropertiesBox />
    <DockTabs $height={9}>
      <DockTab type="button" $active $short>Свойства</DockTab>
      <DockTab type="button" $short>Внешний вид</DockTab>
    </DockTabs>
  </Sidebar>
);

/* ---------- graphics area ---------- */

const Main = styled.main`
  display: flex;
  flex-direction: column;
  flex: 1;
  min-width: 0;
  padding: 4px 3px 0 4px;
`;

const Viewport = styled.div`
  position: relative;
  flex: 1;
  min-height: 0;
  overflow: hidden;
  background: #fff;
  border: 1px solid #9b9b9b;
`;

const Scene = styled.svg`
  position: absolute;
  inset: 0;
  width: 100%;
  height: 100%;
`;

const Overlay = styled.div`
  position: relative;
  padding: 7px 0 0 7px;
`;

const Hint = styled.p`
  margin: 0 0 7px;
  font-size: 10px;
  line-height: 12px;
  color: #66686b;
`;

const ToolGuides = styled.div`
  display: grid;
  grid-template-columns: 26px 26px;
  gap: 6px;
  padding: 13px 0 0 2px;
`;

const Guide = styled.button<{ $size?: number }>`
  display: grid;
  place-items: center;
  width: ${p => p.$size ?? 26}px;
  height: ${p => p.$size ?? 26}px;
  margin: 0;
  padding: 0;
  border: 1px solid #85888d;
  border-radius: ${p => (p.$size ? 7 : 5)}px;
  background: #fff;
  &:disabled { border-color: #d5d7d9; }
`;

const MainGuide = styled(Guide)`
  margin-left: 3px;
`;

const GuideBreak = styled.div`
  grid-column: 1 / -1;
  height: 12px;
`;

const Brand = styled.div`
  position: absolute;
  top: 21px;
  right: 23px;
  text-align: right;
  color: #454648;
`;

const BrandName = styled.div`
  font: 700 21px/26px "Open Sans", sans-serif;
`;

const BrandVersion = styled.div`
  font: 13px/16px "Open Sans", sans-serif;
`;

const DocTabs = styled.div`
  display: flex;
  align-items: flex-start;
  flex: none;
  height: 9px;
  margin-top: 3px;
  overflow: hidden;
`;

const DocTab = styled.button`
  ${toolBase}
  flex: none;
  gap: 3px;
  height: 19px;
  padding: 0 2px 4px;
  border: solid #7c9dbd;
  border-width: 1px 1px 0;
  background: #e9eef5;
  color: #23486e;
  font-weight: 700;
`;

const DocNav = styled.div`
  display: flex;
  gap: 6px;
  margin: 5px 2px 0 auto;
`;

const NavButton = styled.button`
  padding: 0;
  border: 0;
  background: transparent;
`;

const Cylinder = ({ x, y }: { x: number; y: number }) => (
  <g transform={`translate(${x} ${y})`} stroke="#2c3a2e" strokeWidth="0.8">
    <path d="M5-38 -60-52C-84-30-82 15-67 25L-8 37Z" fill="url(#cyl)" />
    <ellipse rx="15.5" ry="39" transform="rotate(8)" fill="#728e74" />
  </g>
);

const Model = () => (
  <Scene viewBox="262 88 1014 619" preserveAspectRatio="xMinYMin meet" aria-hidden="true">
    <defs>
      <linearGradient id="cyl" x1="0.55" y1="0.2" x2="0.4" y2="1">
        <stop offset="0" stopColor="#9cc5a1" />
        <stop offset="0.35" stopColor="#aed9b4" />
        <stop offset="0.52" stopColor="#c9edcd" />
        <stop offset="0.7" stopColor="#a3cba8" />
        <stop offset="1" stopColor="#7c9e80" />
      </linearGradient>
    </defs>

    <Cylinder x={475.5} y={509} />
    <Cylinder x={765} y={355} />

    <g strokeLinejoin="round">
      <path d="M351 421 786 189 844 202 410 433Z" fill="#90b194" stroke="#2c3a2e" strokeWidth="0.9" />
      <path d="M351 421 410 433 404 511 345 499Z" fill="#b9e1bd" stroke="#2c3a2e" strokeWidth="0.9" />
      <path d="M410 433 844 202 839 280 404 511Z" fill="#c1b334" stroke="#14120a" strokeWidth="1.5" />
    </g>
    <g fill="none" stroke="#25352a">
      {[[361.5, 437.5], [397, 445], [357.5, 494.5], [393, 501.5]].map(([cx, cy]) => (
        <circle key={cx} cx={cx} cy={cy} r="2.5" />
      ))}
    </g>

    <g stroke="#35442f" strokeWidth="0.9" strokeLinejoin="round">
      <path d="M491 296 578 250 707 276 620 323Z" fill="#90b194" />
      <path d="M491 296 620 323 619 347 489 321Z" fill="#b9e1bd" />
      <path d="M620 323 707 276 706 302 619 347Z" fill="#9b9c4c" />
    </g>
    <path d="M584 340 620 323 619 347Z" fill="#dbe48b" />
    <path d="M584 340 707 274.5" stroke="#8f8a35" strokeWidth="1.2" />
    <path d="M620 323 619 347" stroke="#5c6a33" strokeWidth="0.9" />

    <path d="M427 432 444 419 441 425 462 429 459 442 437 438 437 446Z" fill="#d4c722" />
    <path d="M484 433 508 435 510 428 518 447 499 457 502 450 483 448Z" fill="#d4c722" />
    <path d="M622 354 641 357 642 355 658 362.5 639 364 640 361 621 358Z" fill="#f8de31" />
    <path d="M470 436V448L473 445.5 475 449.5 477 448.5 475 445 478.5 444.5Z" fill="#fff" stroke="#2b2b2b" strokeWidth="0.8" />

    <g>
      <path d="M780 268 781.5 243" stroke="#e5372b" strokeWidth="2" />
      <path d="M778.5 245 782 233 785 245Z" fill="#ea1a12" />
      <path d="M780 268 771 272" stroke="#3c7a2f" strokeWidth="1.5" />
      <path d="M763 277 768 270.5 773 273.5Z" fill="#1c8a2c" />
      <path d="M781 268 802 272" stroke="#6f86b8" strokeWidth="2" />
      <path d="M801 269 814 274 800 275.5Z" fill="#5b7be0" />
      <circle cx="780" cy="268" r="2" fill="#8a8f86" />
    </g>
    <g fontFamily="Liberation Sans, Arial, sans-serif" fontSize="9" fontWeight="700" textAnchor="middle">
      <text x="783" y="225" fill="#d9502f">X</text>
      <text x="759" y="282" fill="#4b8a22">Y</text>
      <text x="823" y="280" fill="#5d6790">Z</text>
      <text x="310" y="632" fill="#e0202a">X</text>
      <text x="288" y="675" fill="#2a7a48">Y</text>
      <text x="339" y="671" fill="#2a22c0">Z</text>
    </g>

    <path d="M308.5 647V643" stroke="#d01818" strokeWidth="1.5" />
    <path d="M306 644 309 635 311.5 644Z" fill="#d01818" />
    <path d="M320 663 325 664" stroke="#2018b0" strokeWidth="1.5" />
    <path d="M324 661.5 333 665.5 323.5 667Z" fill="#2018b0" />
    <g stroke="#9aa0b4" strokeWidth="0.7" strokeLinejoin="round">
      <path d="M297 653 302 651 318 653 311 655Z" fill="#f1f2fa" />
      <path d="M297 653 311 655 310 672 298 669Z" fill="#fafbff" />
      <path d="M311 655 318 653 316 667 310 672Z" fill="#c3c8ee" />
    </g>
    <ellipse cx="308" cy="653" rx="3.2" ry="2" fill="#e0101c" />
    <circle cx="304" cy="663" r="3.2" fill="#149a28" />
    <ellipse cx="315" cy="662.5" rx="2.3" ry="3.5" fill="#1c18c4" />
  </Scene>
);

const GuideButton = ({ icon, label, disabled }: { icon: string; label: string; disabled?: boolean }) => (
  <Guide type="button" aria-label={label} disabled={disabled}><Icon name={icon} size={20} /></Guide>
);

const arrow = (d: string) => (
  <svg width="5" height="7" viewBox="0 0 5 7" aria-hidden="true"><path d={d} fill="none" stroke="#333" strokeWidth="0.9" /></svg>
);

const GraphicsArea = () => (
  <Main>
    <Viewport>
      <Model />
      <Overlay>
        <Hint>Вытянуть грань (1)</Hint>
        <MainGuide type="button" aria-label="Выбор" $size={38}><Icon name="goldarrow" size={28} /></MainGuide>
        <ToolGuides>
          <GuideButton icon="vdir" label="Направление вытягивания" />
          <GuideButton icon="vrev" label="Вращение" />
          <GuideButton icon="vedge" label="Поворот кромки" />
          <GuideButton icon="vsweep" label="Протягивание" />
          <GuideButton icon="vscale" label="Масштабирование" />
          <GuideBreak />
          <GuideButton icon="vupto" label="До объекта" />
          <GuideButton icon="vnext" label="Завершить" disabled />
        </ToolGuides>
      </Overlay>
      <Brand>
        <BrandName>ANSYS</BrandName>
        <BrandVersion>R18.1</BrandVersion>
      </Brand>
    </Viewport>
    <DocTabs>
      <DocTab type="button"><Icon name="component" size={12} />Конструкция1* ×</DocTab>
      <DocNav>
        <NavButton type="button" aria-label="Назад">{arrow('M4.5 .5V6L1 3.5Z')}</NavButton>
        <NavButton type="button" aria-label="Вперед">{arrow('M.5 .5V6L4 3.5Z')}</NavButton>
        <NavButton type="button" aria-label="Закрыть">{arrow('M.5 1 4.5 6M4.5 1 .5 6')}</NavButton>
      </DocNav>
    </DocTabs>
  </Main>
);

export default function App() {
  return (
    <Window>
      <GlobalStyle />
      <TabBar>
        {ribbonTabs.map(t => (
          <RibbonTab type="button" key={t} $active={t === 'Конструкция'} $file={t === 'Файл'}>{t}</RibbonTab>
        ))}
        <TabBarTools>
          <BarButton type="button" aria-label="Свернуть ленту">
            <svg width="7" height="7" viewBox="0 0 7 7"><path d="M1 5 3.5 2 6 5" fill="none" stroke="#fff" strokeWidth="1.5" /></svg>
          </BarButton>
          <BarButton type="button" aria-label="Справка">
            <svg width="13" height="13" viewBox="0 0 13 13">
              <circle cx="6.5" cy="6.5" r="5.8" fill="#2a4fc0" stroke="#c9d8f2" />
              <path d="M6.5 3V7.5M6.5 9V10.5" stroke="#fff" strokeWidth="2" />
            </svg>
          </BarButton>
        </TabBarTools>
      </TabBar>
      <RibbonBar />
      <Workspace>
        <SidePanels />
        <GraphicsArea />
      </Workspace>
    </Window>
  );
}
